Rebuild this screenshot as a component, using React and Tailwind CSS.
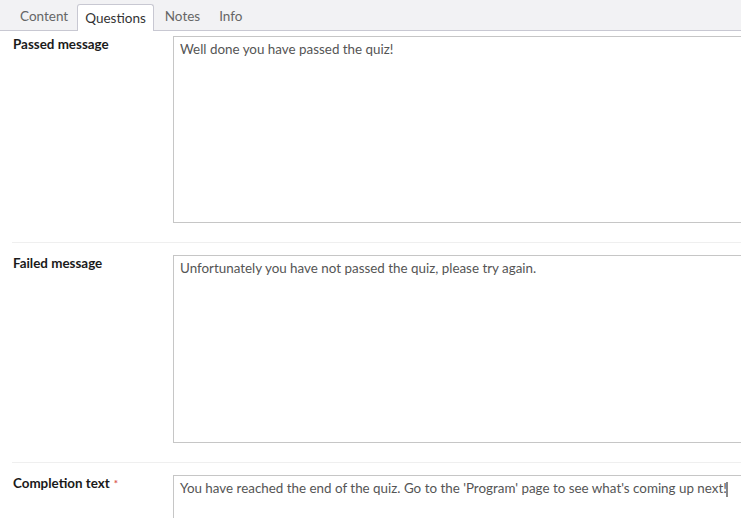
import React from "react";

const tabs = [
    { name: "Content", cls: "pl-[20px] pr-[9px]" },
    { name: "Questions", cls: "" },
    { name: "Notes", cls: "pl-[11px] pr-[9px]" },
    { name: "Info", cls: "pl-[10px] pr-[9px]" },
];

function Field({ label, required, text, caret, first, last, tall }) {
    return (
        <div className={`flex ml-[12px] ${first ? "pt-[5px]" : "pt-[12px]"} ${last ? "" : "pb-[19px] border-b border-[#efefef]"}`}>
            <div className="w-[161px] shrink-0 pl-px text-[13.4px] font-bold text-[#1a1a1a] leading-[17px]">
                {label}
                {required && <span className="text-[#d9534f] text-[10px] align-top ml-[4px]">*</span>}
            </div>
            <div className={`w-[600px] shrink-0 ${tall ? "h-[188px]" : "h-[187px]"} border border-[#c6c6c6] bg-white px-[6px] py-[3px] text-[13.4px] text-[#555] leading-[18px]`}>
                {text}
                {caret && <span className="inline-block w-[2px] h-[15px] bg-[#888] align-middle -ml-px"></span>}
            </div>
        </div>
    );
}

export default function App() {
    return (
        <div className="w-[741px] h-[518px] overflow-hidden bg-white" style={{ fontFamily: "Lato, 'Open Sans', sans-serif" }}>
            <div className="h-[31px] bg-[#f2f2f4] border-b border-[#c8c8d2] flex items-end">
                {tabs.map((t) => (
                    t.name === "Questions" ? (
                        <div key={t.name} className="h-[27px] -mb-px pl-[7px] pr-[7px] bg-white border border-b-0 border-[#c8c8d2] rounded-t-[3px] text-[13.5px] text-[#333] flex items-center">
                            {t.name}
                        </div>
                    ) : (
                        <div key={t.name} className={`h-[27px] pb-px ${t.cls} text-[13.5px] text-[#666] flex items-center`}>
                            {t.name}
                        </div>
                    )
                ))}
            </div>
            <Field first label="Passed message" text="Well done you have passed the quiz!" />
            <Field tall label="Failed message" text="Unfortunately you have not passed the quiz, please try again." />
            <Field last required label="Completion text" text="You have reached the end of the quiz. Go to the 'Program' page to see what's coming up next!" caret />
        </div>
    );
}
